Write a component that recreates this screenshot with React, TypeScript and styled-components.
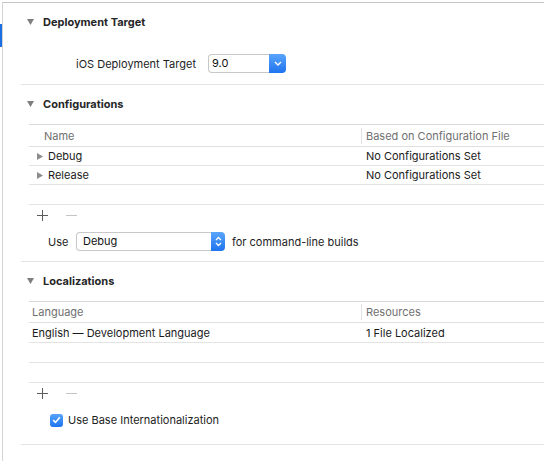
import React from "react";
import styled, { createGlobalStyle } from "styled-components";

const GlobalStyle = createGlobalStyle`
  html, body {
    margin: 0;
    padding: 0;
    background: #fff;
  }
  body {
    font-family: Inter, "Liberation Sans", sans-serif;
    font-size: 11px;
    color: #1d1d1d;
  }
`;

const Window = styled.div`
  display: flex;
  width: 544px;
  height: 461px;
  overflow: hidden;
  background: #fff;
`;

const Gutter = styled.div`
  width: 2px;
  flex-shrink: 0;
  padding-top: 24px;
`;

const SelectionMark = styled.div`
  height: 23px;
  background: #1b6fe0;
`;

const Editor = styled.div`
  flex: 1;
  margin-top: 2px;
  border-top: 1px solid #c4c4c4;
  border-left: 1px solid #d3d3d3;
`;

const Section = styled.section<{ $pb: number }>`
  margin-left: 18px;
  padding-top: 9px;
  padding-bottom: ${(p) => p.$pb}px;
  border-bottom: 1px solid #e3e3e3;
`;

const SectionHeader = styled.div`
  display: flex;
  align-items: center;
  gap: 9px;
  height: 20px;
  padding-left: 6px;
  font-weight: 700;
  color: #262626;
`;

const FormRow = styled.div`
  display: flex;
  align-items: center;
  gap: 12px;
  height: 19px;
  margin-top: 22px;
`;

const FormLabel = styled.span`
  width: 175px;
  text-align: right;
`;

const Popup = styled.div<{ $w: number }>`
  display: flex;
  width: ${(p) => p.$w}px;
  height: 19px;
  flex-shrink: 0;
`;

const PopupValue = styled.span<{ $pl: number }>`
  flex: 1;
  box-sizing: border-box;
  padding-left: ${(p) => p.$pl}px;
  line-height: 17px;
  border: 1px solid #c8c8c8;
  border-right: none;
  border-radius: 4px 0 0 4px;
  background: #fff;
  color: #111;
`;

const PopupButton = styled.span<{ $w: number }>`
  display: flex;
  align-items: center;
  justify-content: center;
  width: ${(p) => p.$w}px;
  border-radius: 0 4px 4px 0;
  background: linear-gradient(#5aa5fb, #1e73ef);
`;

const Table = styled.div`
  margin-top: 10px;
  margin-left: 8px;
  border-top: 1px solid #d9d9d9;
`;

const HeaderRow = styled.div<{ $h: number }>`
  display: flex;
  align-items: center;
  height: ${(p) => p.$h}px;
  border-bottom: 1px solid #e0e0e0;
  color: #707070;
`;

const HeaderCell = styled.span<{ $pl: number; $w?: number }>`
  box-sizing: border-box;
  width: ${(p) => (p.$w ? `${p.$w}px` : "auto")};
  padding-left: ${(p) => p.$pl}px;
`;

const ColumnDivider = styled.span`
  width: 1px;
  height: 16px;
  background: #e1e1e1;
`;

const BodyRow = styled.div<{ $h: number }>`
  display: flex;
  align-items: center;
  height: ${(p) => p.$h}px;
  border-bottom: 1px solid #e3e3e3;
  color: #1a1a1a;
`;

const NameCell = styled.span<{ $pl: number }>`
  display: flex;
  align-items: center;
  gap: 5px;
  box-sizing: border-box;
  width: 333px;
  padding-left: ${(p) => p.$pl}px;
`;

const ValueCell = styled.span`
  padding-left: 4px;
`;

const Toolbar = styled.div`
  display: flex;
  align-items: center;
  gap: 18px;
  height: 21px;
  padding-left: 16px;
`;

const UseRow = styled.div`
  display: flex;
  align-items: center;
  height: 19px;
  margin-top: 6px;
  padding-left: 27px;
`;

const UseLabel = styled.span`
  width: 28px;
`;

const UseHint = styled.span`
  margin-left: 7px;
`;

const CheckRow = styled.label`
  display: flex;
  align-items: center;
  gap: 5px;
  height: 16px;
  margin-top: 8px;
  padding-left: 29px;
`;

const CheckBox = styled.span`
  display: flex;
  align-items: center;
  justify-content: center;
  width: 13px;
  height: 13px;
  border-radius: 3px;
  background: linear-gradient(#55a3fb, #1f74ef);
`;

const SectionTriangle = () => (
  <svg width="7" height="6" viewBox="0 0 7 6">
    <polygon points="0,0 7,0 3.5,6" fill="#7e7e7e" />
  </svg>
);

const RowTriangle = () => (
  <svg width="6" height="7" viewBox="0 0 6 7">
    <polygon points="0,0 6,3.5 0,7" fill="#8c8c8c" />
  </svg>
);

const ChevronDown = () => (
  <svg width="8" height="5" viewBox="0 0 8 5">
    <polyline points="1,1 4,4 7,1" fill="none" stroke="#fff" strokeWidth="1.4" />
  </svg>
);

const ChevronUpDown = () => (
  <svg width="7" height="11" viewBox="0 0 7 11">
    <polyline points="1,4 3.5,1.5 6,4" fill="none" stroke="#fff" strokeWidth="1.3" />
    <polyline points="1,7 3.5,9.5 6,7" fill="none" stroke="#fff" strokeWidth="1.3" />
  </svg>
);

const PlusMinus = () => (
  <Toolbar>
    <svg width="11" height="11" viewBox="0 0 11 11">
      <line x1="0" y1="5.5" x2="11" y2="5.5" stroke="#5c5c5c" strokeWidth="1" />
      <line x1="5.5" y1="0" x2="5.5" y2="11" stroke="#5c5c5c" strokeWidth="1" />
    </svg>
    <svg width="11" height="11" viewBox="0 0 11 11">
      <line x1="0" y1="5.5" x2="11" y2="5.5" stroke="#c4c4c4" strokeWidth="1" />
    </svg>
  </Toolbar>
);

const configurations = [
  { name: "Debug", file: "No Configurations Set" },
  { name: "Release", file: "No Configurations Set" },
];

const localizations = [{ language: "English \u2014 Development Language", resources: "1 File Localized" }];

export default function App() {
  return (
    <Window>
      <GlobalStyle />
      <Gutter>
        <SelectionMark />
      </Gutter>
      <Editor>
        <Section $pb={11}>
          <SectionHeader>
            <SectionTriangle />
            Deployment Target
          </SectionHeader>
          <FormRow>
            <FormLabel>iOS Deployment Target</FormLabel>
            <Popup $w={78}>
              <PopupValue $pl={3}>9.0</PopupValue>
              <PopupButton $w={17}>
                <ChevronDown />
              </PopupButton>
            </Popup>
          </FormRow>
        </Section>

        <Section $pb={10}>
          <SectionHeader>
            <SectionTriangle />
            Configurations
          </SectionHeader>
          <Table>
            <HeaderRow $h={21}>
              <HeaderCell $pl={15} $w={332}>Name</HeaderCell>
              <ColumnDivider />
              <HeaderCell $pl={4}>Based on Configuration File</HeaderCell>
            </HeaderRow>
            {configurations.map((c) => (
              <BodyRow key={c.name} $h={18}>
                <NameCell $pl={8}>
                  <RowTriangle />
                  {c.name}
                </NameCell>
                <ValueCell>{c.file}</ValueCell>
              </BodyRow>
            ))}
            <BodyRow $h={19} />
          </Table>
          <PlusMinus />
          <UseRow>
            <UseLabel>Use</UseLabel>
            <Popup $w={149}>
              <PopupValue $pl={6}>Debug</PopupValue>
              <PopupButton $w={14}>
                <ChevronUpDown />
              </PopupButton>
            </Popup>
            <UseHint>for command-line builds</UseHint>
          </UseRow>
        </Section>

        <Section $pb={16}>
          <SectionHeader>
            <SectionTriangle />
            Localizations
          </SectionHeader>
          <Table>
            <HeaderRow $h={20}>
              <HeaderCell $pl={3} $w={332}>Language</HeaderCell>
              <ColumnDivider />
              <HeaderCell $pl={4}>Resources</HeaderCell>
            </HeaderRow>
            {localizations.map((l) => (
              <BodyRow key={l.language} $h={19}>
                <NameCell $pl={3}>{l.language}</NameCell>
                <ValueCell>{l.resources}</ValueCell>
              </BodyRow>
            ))}
            <BodyRow $h={19} />
            <BodyRow $h={19} />
          </Table>
          <PlusMinus />
          <CheckRow>
            <CheckBox>
              <svg width="9" height="8" viewBox="0 0 9 8">
                <polyline points="1.2,4.2 3.5,6.4 7.8,1.3" fill="none" stroke="#fff" strokeWidth="1.6" />
              </svg>
            </CheckBox>
            Use Base Internationalization
          </CheckRow>
        </Section>
      </Editor>
    </Window>
  );
}
